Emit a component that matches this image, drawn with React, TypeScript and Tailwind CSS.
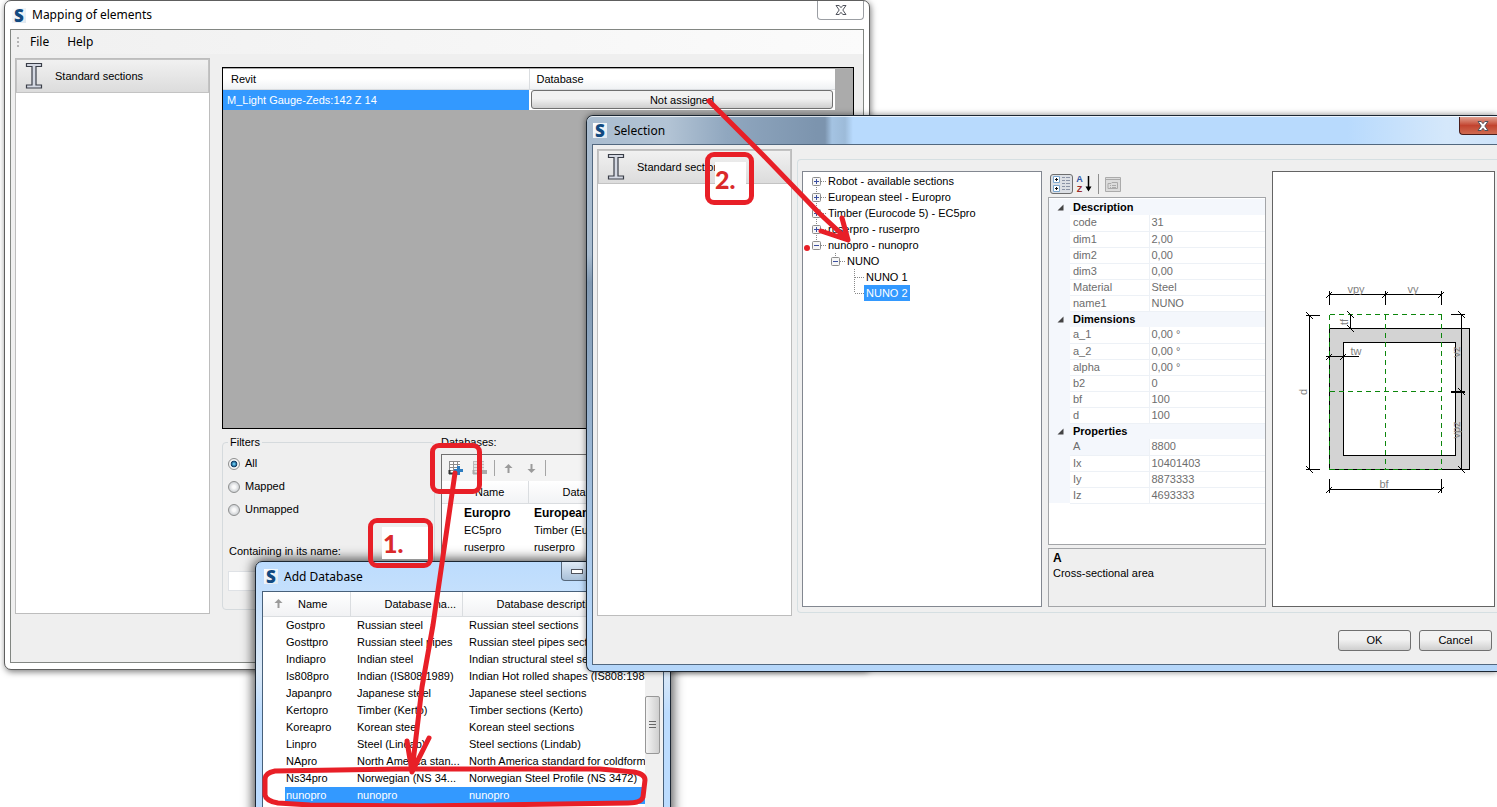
import React from "react";

const DATABASES = [
  ["Gostpro", "Russian steel", "Russian steel sections"],
  ["Gosttpro", "Russian steel pipes", "Russian steel pipes sections"],
  ["Indiapro", "Indian steel", "Indian structural steel sections"],
  ["Is808pro", "Indian (IS808:1989)", "Indian Hot rolled shapes (IS808:1989"],
  ["Japanpro", "Japanese steel", "Japanese steel sections"],
  ["Kertopro", "Timber (Kerto)", "Timber sections (Kerto)"],
  ["Koreapro", "Korean steel", "Korean steel sections"],
  ["Linpro", "Steel (Lindab)", "Steel sections (Lindab)"],
  ["NApro", "North America stan...", "North America standard for coldforme"],
  ["Ns34pro", "Norwegian (NS 34...", "Norwegian Steel Profile (NS 3472)"],
  ["nunopro", "nunopro", "nunopro"],
];

const GROUPS = [
  {
    title: "Description",
    rows: [
      ["code", "31"],
      ["dim1", "2,00"],
      ["dim2", "0,00"],
      ["dim3", "0,00"],
      ["Material", "Steel"],
      ["name1", "NUNO"],
    ],
  },
  {
    title: "Dimensions",
    rows: [
      ["a_1", "0,00 °"],
      ["a_2", "0,00 °"],
      ["alpha", "0,00 °"],
      ["b2", "0"],
      ["bf", "100"],
      ["d", "100"],
    ],
  },
  {
    title: "Properties",
    rows: [
      ["A", "8800"],
      ["Ix", "10401403"],
      ["Iy", "8873333"],
      ["Iz", "4693333"],
    ],
  },
];

const TREE = [
  { level: 0, label: "Robot - available sections", open: false, first: true },
  { level: 0, label: "European steel - Europro", open: false },
  { level: 0, label: "Timber (Eurocode 5) - EC5pro", open: false },
  { level: 0, label: "ruserpro - ruserpro", open: false },
  { level: 0, label: "nunopro - nunopro", open: true, last: true },
  { level: 1, label: "NUNO", open: true, last: true },
  { level: 2, label: "NUNO 1" },
  { level: 2, label: "NUNO 2", last: true, selected: true },
];

const Logo = () => (
  <span className="flex h-[15px] w-[14px] items-center justify-center bg-linear-to-br from-white to-[#dfe8f0] font-['Open_Sans',sans-serif] text-[17px] leading-[15px] font-extrabold text-[#124a80]">
    S
  </span>
);

const BeamIcon = () => (
  <svg width="18" height="28" viewBox="0 0 18 28">
    <path
      d="M1.5 1.5h15v3h-5.500v18.500h5.500v3h-15v-3h5.500V4.500H1.500z"
      fill="#d4d8e2"
      stroke="#3a3e48"
      strokeWidth="1.2"
    />
  </svg>
);

const Arrow = ({ down = false }: { down?: boolean }) => (
  <svg width="9" height="11" viewBox="0 0 9 11" className={down ? "rotate-180" : ""}>
    <path d="M4.500 10V4" stroke="#9a9a9a" strokeWidth="2" />
    <path d="M.5 5L4.500 1l4 4z" fill="#9a9a9a" />
  </svg>
);

const TableIcon = ({ add = false }: { add?: boolean }) => (
  <svg width="16" height="16" viewBox="0 0 16 16">
    <path d="M1 1h11v13H1z" fill={add ? "#fff" : "#e4e4e4"} />
    <path
      d="M1 1.500h11M1 4.500h11M1 7.500h11M1 10.500h6M1.500 1v13M5.500 1v10M9.500 1v8"
      stroke={add ? "#8c8c8c" : "#bbb"}
      fill="none"
    />
    <path d="M1 13.500h6M1.500 10v4" stroke={add ? "#333" : "#aaa"} strokeWidth="2" />
    {add ? (
      <path d="M10.500 6v9M6 10.500h9" stroke="#2c7cc0" strokeWidth="3" />
    ) : (
      <path d="M7 12h8" stroke="#aaa" strokeWidth="4" />
    )}
  </svg>
);

const CloseGlyph = ({ light = false }: { light?: boolean }) => (
  <svg width="12" height="10" viewBox="0 0 12 10">
    <path
      d="M1 .5h3.200L6 2.700 7.800.500H11L7.800 5 11 9.500H7.800L6 7.300 4.200 9.500H1L4.200 5z"
      fill={light ? "#fff" : "#fdfdfd"}
      stroke="#50535c"
      strokeWidth="1"
    />
  </svg>
);

const SectionList = () => (
  <div className="w-[195px] shrink-0 border border-[#bdbdbd] bg-white">
    <button className="flex h-[34px] w-full items-center border border-[#c3c3c3] bg-linear-to-b from-[#f1f1f1] to-[#dcdcdc] pl-2">
      <BeamIcon />
      <span className="ml-3 leading-4">Standard sections</span>
    </button>
  </div>
);

const Radio = ({ label, checked = false }: { label: string; checked?: boolean }) => (
  <label className="flex h-[23px] items-center gap-[5px]">
    <input
      type="radio"
      name="filter"
      defaultChecked={checked}
      className="h-3 w-3 appearance-none rounded-full border border-[#8e8f8f] bg-[radial-gradient(circle,#fafafa_20%,#d0d3d6_70%)] checked:bg-[radial-gradient(circle,#5fc0ea_10%,#0f3a63_42%,#f4f4f4_52%)]"
    />
    {label}
  </label>
);

const MappingWindow = () => (
  <section className="absolute top-0 left-[4px] flex h-[670px] w-[866px] flex-col rounded-[7px] border border-[#5e5e5e] bg-white px-[5px] pb-[6px] shadow-[1px_2px_6px_rgba(0,0,0,0.5)]">
    <header className="flex h-7 shrink-0 items-center gap-[6px] pl-[2px]">
      <Logo />
      <h1 className="font-['Noto_Sans',sans-serif] text-[12px] leading-4">Mapping of elements</h1>
      <button
        aria-label="Close"
        className="mb-auto ml-auto flex h-[19px] w-[47px] items-center justify-center rounded-b-[4px] border border-t-0 border-[#9b9ea3] bg-white"
      >
        <CloseGlyph />
      </button>
    </header>
    <div className="flex min-h-0 flex-1 flex-col border border-[#828682] bg-[#efefef]">
      <nav className="flex h-6 shrink-0 items-center bg-linear-to-r from-[#f0f0f0] to-[#fbfbfb] pl-[6px] font-['Noto_Sans',sans-serif] text-[12px]">
        <span className="h-[10px] border-l-2 border-dotted border-[#b5b5b5]" />
        <button className="ml-[11px]">File</button>
        <button className="ml-[18px]">Help</button>
      </nav>
      <div className="flex min-h-0 flex-1 gap-3 pt-1 pr-[9px] pb-12 pl-1">
        <SectionList />
        <div className="flex min-w-0 flex-1 flex-col pt-[9px]">
          <div className="h-[362px] shrink-0 border border-black bg-[#ababab] pt-px">
            <table className="w-[612px] table-fixed border-collapse text-left">
              <thead>
                <tr className="h-5 bg-linear-to-b from-white from-50% to-[#f0f2f4]">
                  <th className="border-r border-b border-[#dadde0] pl-2 font-normal">Revit</th>
                  <th className="border-b border-[#dadde0] pl-[7px] font-normal">Database</th>
                </tr>
              </thead>
              <tbody>
                <tr className="h-[21px]">
                  <td className="bg-[#3399ff] pl-1 text-white">M_Light Gauge-Zeds:142 Z 14</td>
                  <td className="bg-white px-[2px]">
                    <button className="block h-[19px] w-full rounded-[3px] border border-[#707070] bg-linear-to-b from-[#f2f2f2] from-45% to-[#cfcfcf] leading-4">
                      Not assigned
                    </button>
                  </td>
                </tr>
              </tbody>
            </table>
          </div>
          <div className="flex min-h-0 flex-1 gap-[6px] pt-[5px]">
            <fieldset className="mb-1 w-[213px] shrink-0 rounded-[4px] border border-[#d5dadd] px-[5px] pt-[2px]">
              <legend className="px-[2px] leading-4">Filters</legend>
              <Radio label="All" checked />
              <Radio label="Mapped" />
              <Radio label="Unmapped" />
              <label className="mt-[22px] ml-px block leading-4" htmlFor="contains">
                Containing in its name:
              </label>
              <input id="contains" className="mt-3 block h-5 w-full border border-[#dfe2e6] bg-white px-1" />
            </fieldset>
            <div className="flex min-w-0 flex-1 flex-col">
              <h2 className="leading-4">Databases:</h2>
              <div className="mt-1 flex-1 border border-[#707070] bg-white">
                <div className="flex h-[26px] items-center bg-[#f3f3f3] pl-[6px]">
                  <button aria-label="Add database">
                    <TableIcon add />
                  </button>
                  <button aria-label="Remove database" className="ml-2">
                    <TableIcon />
                  </button>
                  <span className="ml-[6px] h-4 border-l border-[#a5a5a5]" />
                  <button aria-label="Move up" className="ml-[9px]">
                    <Arrow />
                  </button>
                  <button aria-label="Move down" className="ml-[14px]">
                    <Arrow down />
                  </button>
                  <span className="ml-[9px] h-4 border-l border-[#a5a5a5]" />
                </div>
                <table className="w-full table-fixed border-collapse text-left">
                  <thead>
                    <tr className="h-[22px] bg-linear-to-b from-white to-[#f2f3f5]">
                      <th className="w-[86px] border-r border-b border-[#dadde0] pl-[33px] font-normal">Name</th>
                      <th className="border-b border-[#dadde0] pl-[34px] font-normal">Database name</th>
                    </tr>
                  </thead>
                  <tbody className="whitespace-nowrap">
                    <tr className="h-[19px] text-[12px] font-bold">
                      <td className="pl-[22px]">Europro</td>
                      <td className="pl-[6px]">European steel</td>
                    </tr>
                    <tr className="h-[17px]">
                      <td className="pl-[22px]">EC5pro</td>
                      <td className="pl-[6px]">Timber (Eurocode 5)</td>
                    </tr>
                    <tr className="h-[17px]">
                      <td className="pl-[22px]">ruserpro</td>
                      <td className="pl-[6px]">ruserpro</td>
                    </tr>
                  </tbody>
                </table>
              </div>
            </div>
          </div>
        </div>
      </div>
    </div>
  </section>
);

const AddDatabaseWindow = () => (
  <section className="absolute top-[561px] left-[255px] w-[416px] rounded-t-[7px] border border-[#1c2733] bg-linear-to-b from-[#bcdcfe] from-0% via-[#dbe9f7] via-40% to-[#bcdcfe] to-55% px-[6px] pb-[6px] shadow-[0_0_12px_2px_rgba(0,0,0,0.7)]">
    <header className="flex h-[29px] items-center gap-[6px] pl-[2px]">
      <Logo />
      <h2 className="font-['Noto_Sans',sans-serif] text-[12px] leading-4">Add Database</h2>
      <button
        aria-label="Minimize"
        className="mr-[72px] mb-auto ml-auto flex h-[19px] w-[31px] items-center justify-center rounded-bl-[4px] border border-t-0 border-[#56677a] bg-linear-to-b from-[#dfeaf6] to-[#a9c0d8]"
      >
        <span className="h-[5px] w-3 border border-[#50535c] bg-white" />
      </button>
    </header>
    <div className="flex h-[240px] border border-[#47607a] bg-white">
      <div className="min-w-0 flex-1 overflow-hidden">
        <table className="w-[398px] table-fixed border-collapse text-left whitespace-nowrap">
          <thead>
            <tr className="h-[24px] bg-linear-to-b from-white to-[#f1f2f4]">
              <th className="w-[87px] border-r border-b border-[#dadde0] font-normal">
                <span className="flex items-center gap-[15px] pl-[11px]">
                  <Arrow />
                  Name
                </span>
              </th>
              <th className="w-[112px] border-r border-b border-[#dadde0] pl-[34px] font-normal">Database na...</th>
              <th className="border-b border-[#dadde0] pl-[34px] font-normal">Database description</th>
            </tr>
          </thead>
        </table>
        <table className="w-full table-fixed border-collapse text-left whitespace-nowrap">
          <tbody>
            {DATABASES.map(([name, title, description]) => (
              <tr key={name} className={name === "nunopro" ? "h-[17px] text-white" : "h-[17px]"}>
                <td className="w-[22px]" />
                <td className={name === "nunopro" ? "w-[66px] bg-[#3399ff] pl-px" : "w-[66px] pl-px"}>{name}</td>
                <td className={name === "nunopro" ? "w-[112px] bg-[#3399ff] pl-[6px]" : "w-[112px] pl-[6px]"}>
                  {title}
                </td>
                <td className={name === "nunopro" ? "bg-[#3399ff] pl-[6px]" : "pl-[6px]"}>{description}</td>
              </tr>
            ))}
          </tbody>
        </table>
      </div>
      <div className="flex w-[18px] flex-col bg-[#f0f0f0] pt-[104px] pr-[3px]">
        <div className="flex h-[58px] w-[15px] items-center justify-center rounded-[2px] border border-[#979797] bg-linear-to-r from-[#f4f4f4] to-[#cfcfcf]">
          <span className="h-2 w-[7px] bg-[repeating-linear-gradient(#666_0_1px,transparent_1px_3px)]" />
        </div>
      </div>
    </div>
  </section>
);

const TreeBranch = ({ level, open, first, last }: any) => {
  const width = [23, 42, 61][level];
  const x = [13.5, 32.5, 51.5][level];
  return (
    <svg width={width} height="16" viewBox={`0 0 ${width} 16`} className="shrink-0">
      <path
        d={`M${x} ${first ? 8 : 0}V${last ? 8 : 16}M${x + 0.5} 8.5H${width}`}
        stroke="#888"
        strokeDasharray="1 1"
        shapeRendering="crispEdges"
        fill="none"
      />
      {open !== undefined && (
        <>
          <rect x={x - 4} y="4.500" width="8" height="8" rx="1" fill="#f6f6f6" stroke="#8c8c8c" />
          <path d={`M${x - 2.5} 8.5h5${open ? "" : `M${x} 6v5`}`} stroke="#3b4fa0" fill="none" />
        </>
      )}
    </svg>
  );
};

const PropertyGrid = () => (
  <div className="flex w-[218px] shrink-0 flex-col">
    <div className="flex h-[26px] shrink-0 items-center pl-[2px]">
      <button
        aria-label="Categorized"
        className="flex h-5 w-[23px] items-center justify-center rounded-[3px] border border-[#6e6e6e] bg-[#dcdfe4]"
      >
        <svg width="19" height="16" viewBox="0 0 19 16">
          <path d="M1.500.5h6v6h-6zM1.500 9.500h6v6h-6z" fill="#fff" stroke="#7ba7cf" />
          <path d="M3 3.500h3M4.500 2v3M3 12.500h3M4.500 11v3" stroke="#111" />
          <path
            d="M10 1.500h3M10 4.500h3M10 7.500h3M10 10.500h3M10 13.500h3M14 1.500h4M14 4.500h4M14 7.500h4M14 10.500h4M14 13.500h4"
            stroke="#8b93a5"
          />
        </svg>
      </button>
      <button aria-label="Alphabetical" className="ml-[3px] flex items-center">
        <span className="flex w-[7px] flex-col text-[9px] leading-[10px] font-bold">
          <span className="text-[#2f56a6]">A</span>
          <span className="text-[#9a2a2a]">Z</span>
        </span>
        <svg width="9" height="16" viewBox="0 0 9 16">
          <path d="M5.500 0v14" stroke="#000" strokeWidth="1.500" />
          <path d="M2.500 10.500h6l-3 5z" />
        </svg>
      </button>
      <span className="ml-[6px] h-5 border-l border-[#8f8f8f]" />
      <button aria-label="Property pages" className="ml-[6px]">
        <svg width="16" height="15" viewBox="0 0 16 15">
          <path d="M.5.5h15v14H.5z" fill="#dcdcdc" stroke="#ababab" />
          <path d="M1 2.500h14M3 6.500h3l1-1h5.500v6H3zM5 8.500h1M7 8.500h4M5 10.500h1M7 10.500h4" fill="none" stroke="#aaa" />
        </svg>
      </button>
    </div>
    <div className="min-h-0 flex-1 overflow-hidden border border-[#a3a5a8] bg-white pt-px">
      <table className="w-full table-fixed border-collapse text-left">
        <colgroup>
          <col className="w-[21px]" />
          <col className="w-[79px]" />
          <col />
        </colgroup>
        {GROUPS.map((group) => (
          <tbody key={group.title}>
            <tr className="h-4 bg-[#f4f7fc]">
              <td className="pl-[8px]">
                <svg width="7" height="7" viewBox="0 0 7 7">
                  <path d="M6.500.5v6h-6z" fill="#444" />
                </svg>
              </td>
              <th colSpan={2} className="pl-[3px] text-[11px] leading-[15px] font-bold">
                {group.title}
              </th>
            </tr>
            {group.rows.map(([name, value]) => (
              <tr key={name} className="h-4 text-[#6d6d6d]">
                <td className="bg-[#f4f7fc]" />
                <td
                  className={
                    name === "A"
                      ? "border-r border-b border-[#edf1f6] bg-[#f4f7fc] pl-[3px] leading-[15px]"
                      : "border-r border-b border-[#edf1f6] pl-[3px] leading-[15px]"
                  }
                >
                  {name}
                </td>
                <td className="border-b border-[#edf1f6] pl-[2px] leading-[15px]">{value}</td>
              </tr>
            ))}
          </tbody>
        ))}
      </table>
    </div>
    <div className="mt-[3px] h-[59px] shrink-0 border border-[#a3a5a8] pt-px pl-1">
      <h3 className="text-[12px] leading-4 font-bold">A</h3>
      <p className="leading-[15px]">Cross-sectional area</p>
    </div>
  </div>
);

const SectionDrawing = () => (
  <svg width="222" height="433" viewBox="0 0 222 433" fill="none" stroke="#000" shapeRendering="crispEdges">
    <path d="M56.500 156.500h140v141h-140zM70.500 170.500v113h112v-113z" fill="#d3d3d3" fillRule="evenodd" />
    <path
      d="M56.500 142.500h112M56.500 142.500v155M56.500 297.500h112M168.500 142.500v155M112.500 142.500v155M56.500 219.500h112"
      stroke="#0c860c"
      strokeDasharray="5 4"
    />
    <path d="M56.500 122.500h112M56.500 119v14M112.500 119v14M168.500 119v14" />
    <path d="M56.500 317.500h112M56.500 307v14M168.500 307v14" />
    <path d="M36.500 143v154M33 143.500h14M33 297.500h14" />
    <path d="M188.500 142v155M178 142.500h14M178 297.500h14" />
    <path d="M178 219.500h14" strokeWidth="2" />
    <path d="M77.500 142v14M53 184.500h33" />
    <path
      d="M53 126l6-6M109 126l6-6M165 126l6-6M53 321l6-6M165 321l6-6M53 188l6-6M67 188l6-6M33 140l7 7M33 294l7 7M185 139l7 7M185 216l7 7M185 294l7 7M74 139l7 7M74 153l7 7"
      shapeRendering="auto"
    />
    <g fill="#7f7f7f" stroke="none" fontSize="11" textAnchor="middle">
      <text x="83" y="121">vpy</text>
      <text x="140" y="121">vy</text>
      <text x="83" y="183">tw</text>
      <text x="111" y="316">bf</text>
      <text transform="translate(34 220) rotate(-90)">d</text>
      <text transform="translate(75 150) rotate(-90)">tf</text>
      <text transform="translate(187 180) rotate(-90)">vz</text>
      <text transform="translate(187 258) rotate(-90)">vpz</text>
    </g>
  </svg>
);

const SelectionWindow = () => (
  <section className="absolute top-[115px] right-0 left-[586px] flex h-[557px] flex-col rounded-l-[7px] border border-r-0 border-[#1c2733] bg-linear-to-b from-[#a9bccf] from-25% via-[#8299b1] via-30% to-[#b5d6f9] to-90% pb-[6px] pl-[5px] shadow-[0_0_6px_rgba(0,0,0,0.5)]">
    <header className="-ml-[5px] flex h-[28px] shrink-0 items-center gap-[7px] rounded-tl-[6px] border-t border-white/70 bg-[linear-gradient(90deg,#a9bccf_0,#b3c4d5_80px,#90a7bf_140px,#7c94ae_230px,#7c94ae_238px,#a4c3e2_245px,#9dbbd9_258px,#b8dafd_266px,#b8dafd_760px,#d5e8fb_860px,#cfe4fa_100%)] pl-[6px]">
      <Logo />
      <h2 className="font-['Noto_Sans',sans-serif] text-[12px] leading-4">Selection</h2>
      <button
        aria-label="Close"
        className="mb-auto ml-auto flex h-[18px] w-[38px] items-center justify-end rounded-bl-[4px] border border-t-0 border-r-0 border-[#4a1d1b] bg-linear-to-b from-[#e0a090] via-[#c2432f] via-50% to-[#cf6a50] pr-[8px]"
      >
        <CloseGlyph light />
      </button>
    </header>
    <div className="flex min-h-0 flex-1 flex-col border border-r-0 border-[#52687f] bg-[#efefef]">
      <div className="flex min-h-0 flex-1 gap-[5px] pt-1 pl-1">
        <SectionList />
        <div className="mt-[10px] mb-[3px] flex min-w-0 flex-1 gap-[6px] rounded-l-[4px] border border-r-0 border-[#d5dfe2] pt-[11px] pr-[2px] pb-[5px] pl-1">
          <ul className="w-[240px] shrink-0 border border-[#828790] bg-white pt-px">
            {TREE.map((node) => (
              <li key={node.label} className="flex h-4 items-center">
                <TreeBranch level={node.level} open={node.open} first={node.first} last={node.last} />
                <span className={node.selected ? "bg-[#3399ff] px-[2px] leading-4 text-white" : "px-[2px] leading-4"}>
                  {node.label}
                </span>
              </li>
            ))}
          </ul>
          <PropertyGrid />
          <div className="min-w-0 flex-1 overflow-hidden border border-[#646464] bg-white">
            <SectionDrawing />
          </div>
        </div>
      </div>
      <footer className="flex h-12 shrink-0 justify-end gap-2 pt-[14px] pr-[5px]">
        <button className="h-[21px] w-[73px] rounded-[3px] border border-[#707070] bg-linear-to-b from-[#f2f2f2] from-45% to-[#cfcfcf]">
          OK
        </button>
        <button className="h-[21px] w-[73px] rounded-[3px] border border-[#707070] bg-linear-to-b from-[#f2f2f2] from-45% to-[#cfcfcf]">
          Cancel
        </button>
      </footer>
    </div>
  </section>
);

// hand-drawn steps lying over the windows
const Annotations = () => (
  <div className="pointer-events-none absolute inset-0 font-['Lato',sans-serif] text-[25px] font-black text-[#da2a2a]">
    <div className="absolute top-[518px] left-[368px] h-[50px] w-[65px] rounded-[9px] border-[5px] border-[#e81f27] pt-1 pl-[9px]">
      <div className="h-8 bg-white pl-px leading-8">1.</div>
    </div>
    <div className="absolute top-[152px] left-[705px] h-[53px] w-[49px] rounded-[9px] border-[5px] border-[#e81f27] pt-[5px] pr-[3px] pl-[5px]">
      <div className="h-[34px] bg-white leading-[34px]">2.</div>
    </div>
    <div className="absolute top-[443px] left-[430px] h-[51px] w-[52px] rounded-[9px] border-[5px] border-[#e81f27]" />
    <svg className="absolute top-0 left-0" width="900" height="807" viewBox="0 0 900 807" fill="none" stroke="#e81f27">
      <g strokeWidth="5" strokeLinecap="round" strokeLinejoin="round">
        <path d="M455 473L441 570 433 625 422 687 412 771M407 741L412 772 429 738" />
        <path d="M709 101L763 155 819 213 848 240M842 218L848 240 821 231" />
        <path d="M275 771L400 769H600L634 772Q645 774 645 780L643 797Q641 803 628 803L420 806 310 805 278 803Q266 801 265 795V779Q265 773 275 771z" />
      </g>
      <circle cx="807" cy="248" r="3" fill="#e81f27" stroke="none" />
    </svg>
  </div>
);

const App: React.FC = () => {
  return (
    <main className="relative h-screen overflow-hidden bg-white font-['Liberation_Sans',Arial,sans-serif] text-[11px] text-black">
      <MappingWindow />
      <AddDatabaseWindow />
      <SelectionWindow />
      <Annotations />
    </main>
  );
};

export default App;
